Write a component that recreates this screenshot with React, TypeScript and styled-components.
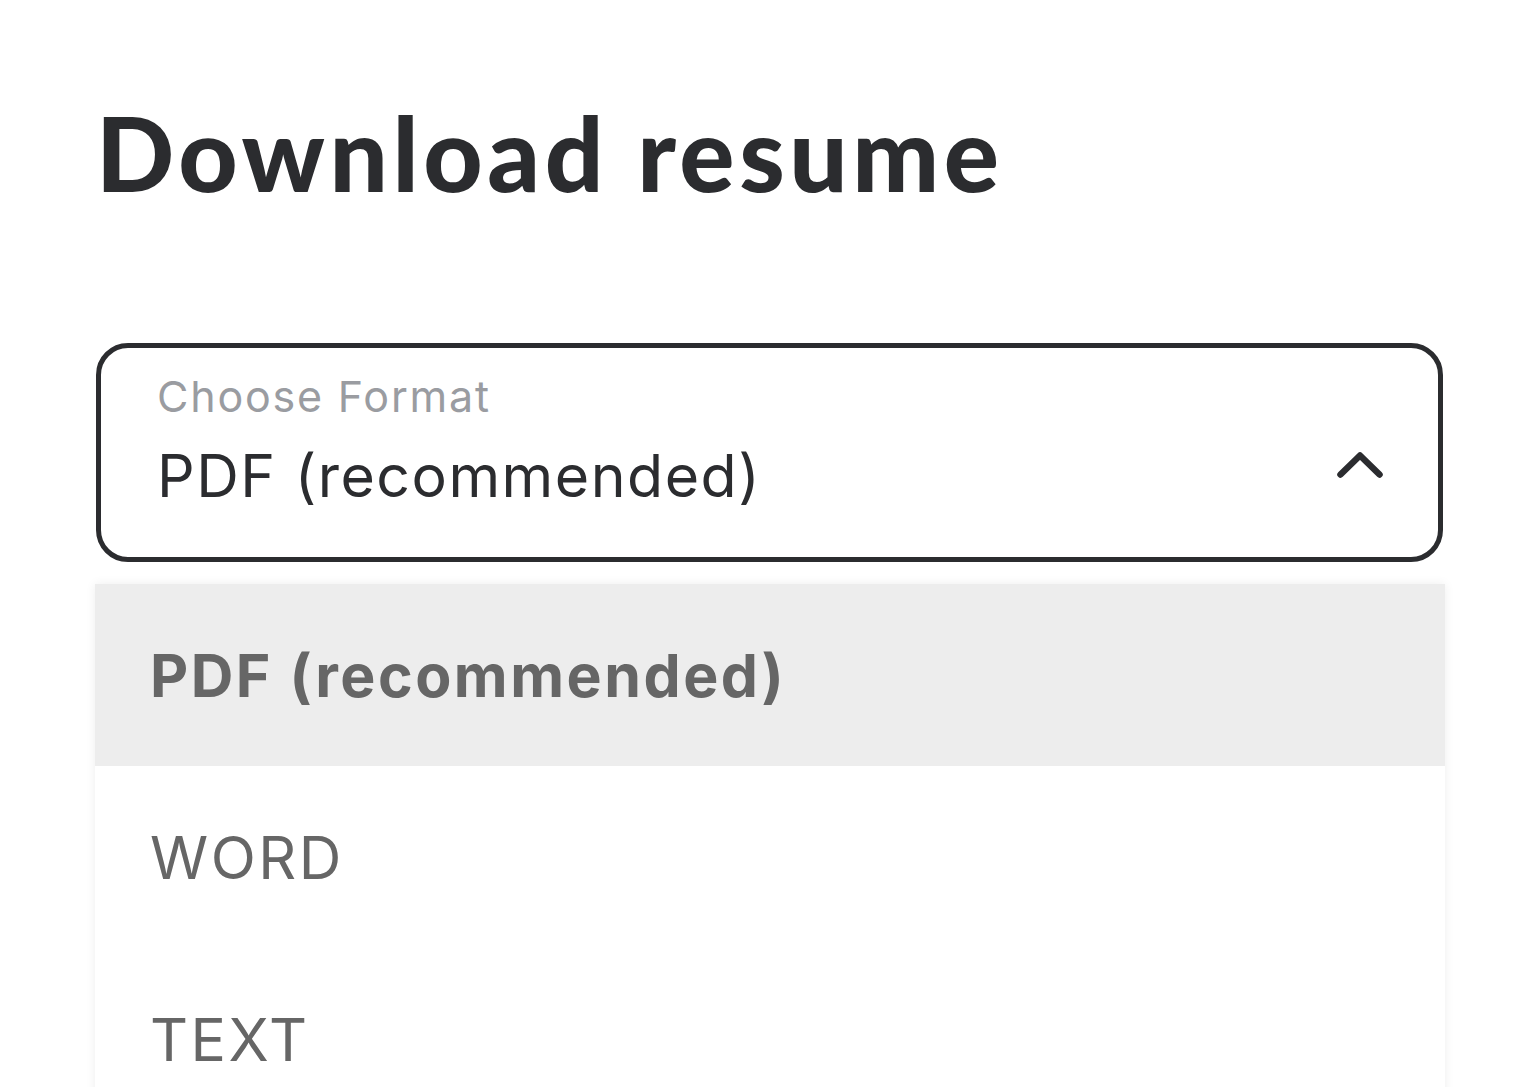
import React, { useState } from "react";
import styled, { createGlobalStyle } from "styled-components";

const GlobalStyle = createGlobalStyle`
  html, body {
    margin: 0;
    padding: 0;
    background: #ffffff;
  }
  body {
    font-family: Inter, "Liberation Sans", sans-serif;
    overflow: hidden;
  }
`;

const Page = styled.div`
  width: 1540px;
  height: 1087px;
  box-sizing: border-box;
  padding: 92px 95px 0 96px;
  display: flex;
  flex-direction: column;
  align-items: flex-start;
  overflow: hidden;
`;

const Title = styled.h1`
  margin: 0;
  flex-shrink: 0;
  font-family: Lato, "Liberation Sans", sans-serif;
  font-weight: 900;
  font-size: 103px;
  line-height: 120px;
  letter-spacing: 4.6px;
  color: #2b2c2f;
`;

const SelectBox = styled.button`
  margin-top: 131px;
  flex-shrink: 0;
  width: 1347px;
  height: 219px;
  box-sizing: border-box;
  border: 5px solid #2b2c2f;
  border-radius: 32px;
  background: #fff;
  padding: 22px 54px 0 56px;
  display: flex;
  align-items: flex-start;
  justify-content: space-between;
  text-align: left;
  cursor: pointer;
  font-family: inherit;
`;

const SelectText = styled.div`
  display: flex;
  flex-direction: column;
`;

const Label = styled.span`
  font-size: 43px;
  line-height: 52px;
  letter-spacing: 1.8px;
  color: #9a9ca1;
`;

const Value = styled.span`
  margin-top: 18px;
  font-size: 59px;
  line-height: 72px;
  letter-spacing: 1.5px;
  color: #2b2c2f;
`;

const ChevronWrap = styled.span`
  margin-top: 81px;
  display: flex;
`;

const Menu = styled.ul`
  list-style: none;
  flex-shrink: 0;
  margin: 22px 0 0 -1px;
  padding: 0;
  width: 1350px;
  background: #fff;
  box-shadow: 0 0 10px rgba(0, 0, 0, 0.07);
`;

const Option = styled.li<{ $active?: boolean }>`
  height: 182px;
  box-sizing: border-box;
  padding-left: 55px;
  display: flex;
  align-items: center;
  font-size: 59px;
  letter-spacing: 2.5px;
  font-weight: ${(p) => (p.$active ? 700 : 400)};
  color: #666666;
  background: ${(p) => (p.$active ? "#ededed" : "#ffffff")};
  cursor: pointer;
`;

const Chevron = () => (
  <svg width="48" height="28" viewBox="0 0 48 28" fill="none">
    <path d="M4.5 23.5 L24 4.5 L43.5 23.5" stroke="#2b2c2f" strokeWidth="6.5" strokeLinecap="round" strokeLinejoin="round" />
  </svg>
);

const formats = ["PDF (recommended)", "WORD", "TEXT"];

export default function App() {
  const [value, setValue] = useState(formats[0]);
  return (
    <>
      <GlobalStyle />
      <Page>
        <Title>Download resume</Title>
        <SelectBox>
          <SelectText>
            <Label>Choose Format</Label>
            <Value>{value}</Value>
          </SelectText>
          <ChevronWrap>
            <Chevron />
          </ChevronWrap>
        </SelectBox>
        <Menu>
          {formats.map((f) => (
            <Option key={f} $active={f === value} onClick={() => setValue(f)}>
              {f}
            </Option>
          ))}
        </Menu>
      </Page>
    </>
  );
}
